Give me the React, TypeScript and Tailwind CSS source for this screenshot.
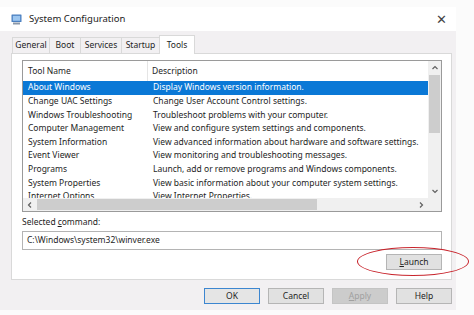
import React from "react";

type Tool = { name: string; desc: string };

const tools: Tool[] = [
  { name: "About Windows", desc: "Display Windows version information." },
  { name: "Change UAC Settings", desc: "Change User Account Control settings." },
  { name: "Windows Troubleshooting", desc: "Troubleshoot problems with your computer." },
  { name: "Computer Management", desc: "View and configure system settings and components." },
  { name: "System Information", desc: "View advanced information about hardware and software settings." },
  { name: "Event Viewer", desc: "View monitoring and troubleshooting messages." },
  { name: "Programs", desc: "Launch, add or remove programs and Windows components." },
  { name: "System Properties", desc: "View basic information about your computer system settings." },
  { name: "Internet Options", desc: "View Internet Properties." },
];

const tabs = [
  { label: "General", w: "w-[38px]" },
  { label: "Boot", w: "w-[32px]" },
  { label: "Services", w: "w-[42px]" },
  { label: "Startup", w: "w-[39px]" },
  { label: "Tools", w: "w-[36px]" },
];

const AppIcon = () => (
  <svg width="11" height="11" viewBox="0 0 11 11">
    <rect x="0.5" y="0.5" width="10" height="7.5" rx="0.5" fill="#4a7fc0" />
    <rect x="1.8" y="1.8" width="7.4" height="5" fill="#9cc6f0" />
    <rect x="2" y="8.5" width="7" height="2" fill="#8a98aa" />
  </svg>
);

const Chevron = ({ dir }: { dir: "up" | "down" | "left" | "right" }) => {
  const d = {
    up: "M1.5 5 L4 2.5 L6.5 5",
    down: "M1.5 3 L4 5.5 L6.5 3",
    left: "M5 1.5 L2.5 4 L5 6.5",
    right: "M3 1.5 L5.5 4 L3 6.5",
  }[dir];
  return (
    <svg width="8" height="8" viewBox="0 0 8 8">
      <path d={d} fill="none" stroke="#606060" strokeWidth="1.2" />
    </svg>
  );
};

const Button = ({ label, primary, disabled, underline }: { label: string; primary?: boolean; disabled?: boolean; underline?: number }) => (
  <div
    className={`w-[56px] h-[16px] flex items-center justify-center text-[8.5px] border ${
      primary ? "border-[#3c86d0] bg-[#e5e5e5]" : disabled ? "border-[#c4c4c4] bg-[#cccccc] text-[#a0a0a0]" : "border-[#b5b5b5] bg-[#e1e1e1]"
    }`}
  >
    {underline === undefined ? (
      label
    ) : (
      <span>
        {label.slice(0, underline)}
        <span className="underline">{label[underline]}</span>
        {label.slice(underline + 1)}
      </span>
    )}
  </div>
);

export default function App() {
  return (
    <div className="w-[474px] h-[315px] bg-[#fbfbfb] overflow-hidden text-[#1e1e1e] pt-[7px]" style={{ fontFamily: '"Noto Sans", "Open Sans", sans-serif' }}>
      <div className="w-[456px] h-[303px] flex flex-col">
        {/* title bar */}
        <div className="h-[24px] bg-white flex items-center pl-[11px] pr-[9px] shrink-0">
          <AppIcon />
          <span className="ml-[7px] text-[9.5px] text-[#222]">System Configuration</span>
          <span className="ml-auto text-[13px] font-light text-[#444] leading-none">✕</span>
        </div>

        {/* body */}
        <div className="flex-1 bg-[#f2f0f2] pl-[11px] pr-[4px] pt-[4px] flex flex-col">
          {/* tabs */}
          <div className="flex items-end h-[18px] pl-[1px]">
            {tabs.map((t) =>
              t.label === "Tools" ? (
                <div key={t.label} className={`${t.w} h-[19px] bg-white border border-b-0 border-[#d9d9d9] text-[8.5px] flex items-center justify-center -mb-[1px] relative z-10`}>
                  {t.label}
                </div>
              ) : (
                <div key={t.label} className={`${t.w} h-[16px] bg-[#f2f0f2] border border-b-0 border-[#d9d9d9] -mr-[1px] text-[8.5px] flex items-center justify-center`}>
                  {t.label}
                </div>
              )
            )}
          </div>

          {/* panel */}
          <div className="h-[227px] bg-white border border-[#d9d9d9] pl-[10px] pr-[9px] pt-[6px] flex flex-col">
            {/* list */}
            <div className="h-[152px] border border-[#9a9a9a] flex flex-col text-[8.5px]">
              <div className="flex flex-1 min-h-0">
                <div className="flex-1 min-w-0 overflow-hidden flex flex-col">
                  <div className="h-[20px] flex shrink-0">
                    <div className="w-[125px] shrink-0 pl-[5px] flex items-center border-r border-[#e5e5e5]">Tool Name</div>
                    <div className="pl-[4px] flex items-center">Description</div>
                  </div>
                  {tools.map((t, i) => (
                    <div key={t.name} className={`h-[13.6px] flex items-center shrink-0 whitespace-nowrap ${i === 0 ? "bg-[#0a78d6] text-white" : ""}`}>
                      <div className="w-[125px] shrink-0 pl-[5px]">{t.name}</div>
                      <div className="pl-[5px]">{t.desc}</div>
                    </div>
                  ))}
                </div>
                {/* vertical scrollbar */}
                <div className="w-[13px] bg-[#f0f0f0] flex flex-col items-center shrink-0">
                  <div className="h-[14px] flex items-center justify-center">
                    <Chevron dir="up" />
                  </div>
                  <div className="w-[11px] h-[58px] bg-[#cdcdcd]" />
                  <div className="flex-1" />
                  <div className="h-[14px] flex items-center justify-center">
                    <Chevron dir="down" />
                  </div>
                </div>
              </div>
              {/* horizontal scrollbar */}
              <div className="h-[13px] flex shrink-0">
                <div className="flex-1 bg-[#f0f0f0] flex items-center">
                  <div className="w-[14px] flex justify-center">
                    <Chevron dir="left" />
                  </div>
                  <div className="w-[280px] h-[11px] bg-[#cdcdcd]" />
                  <div className="flex-1" />
                  <div className="w-[14px] flex justify-center">
                    <Chevron dir="right" />
                  </div>
                </div>
                <div className="w-[13px] bg-[#f0f0f0]" />
              </div>
            </div>

            <div className="mt-[4px] text-[8.5px] h-[13px] flex items-center">
              Selected <span className="underline ml-[2px]">c</span>ommand:
            </div>
            <div className="mt-[2px] h-[19px] border border-[#b4b4b4] bg-white flex items-center pl-[4px] text-[8.5px]">
              C:\Windows\system32\winver.exe
            </div>
            <div className="mt-[4px] flex justify-end relative">
              <Button label="Launch" underline={0} />
              <div className="absolute -right-[27px] -top-[7px] w-[112px] h-[29px] rounded-[50%] border-[1.5px] border-[#c8242c]" />
            </div>
          </div>

          {/* footer buttons */}
          <div className="mt-[8px] flex justify-end gap-[8px]">
            <Button label="OK" primary />
            <Button label="Cancel" />
            <Button label="Apply" disabled underline={0} />
            <Button label="Help" />
          </div>
        </div>
      </div>
    </div>
  );
}
